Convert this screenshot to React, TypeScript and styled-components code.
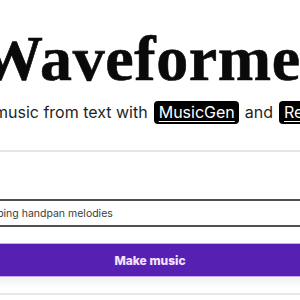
import React from "react";
import styled, { createGlobalStyle } from "styled-components";

const Global = createGlobalStyle`
  html, body { margin: 0; padding: 0; background: #fff; overflow: hidden; }
  body { font-family: Inter, "Noto Sans", sans-serif; color: #1f1f1f; }
`;

const Stage = styled.main`
  width: 740px;
  margin-left: -220px;
  display: flex;
  flex-direction: column;
`;

const Title = styled.h1`
  margin: 27px 0 0 199px;
  font-family: "Liberation Serif", serif;
  font-weight: 700;
  font-size: 64px;
  line-height: 64px;
  letter-spacing: 0.6px;
  -webkit-text-stroke: 0.6px #0a0a0a;
  white-space: nowrap;
  color: #0a0a0a;
`;

const Subtitle = styled.p`
  margin: 10px 0 0 140px;
  font-size: 16px;
  line-height: 23px;
  white-space: nowrap;
  display: flex;
  align-items: center;
  gap: 6px;
  color: #1f1f1f;
`;

const Pill = styled.a`
  background: #000;
  color: #fff;
  border-radius: 4px;
  padding: 0 4px 0 5px;
  line-height: 23px;
  text-decoration: underline;
  text-decoration-thickness: 1px;
  text-underline-offset: 3px;
`;

const Card = styled.section`
  margin-top: 26px;
  border-top: 2px solid #e6e6e6;
  padding: 47px 0 0;
  display: flex;
  flex-direction: column;
  gap: 16px;
`;

const Input = styled.input`
  height: 28px;
  box-sizing: border-box;
  border: none;
  border-top: 2px solid #505050;
  border-bottom: 2px solid #505050;
  padding: 0 0 0 202px;
  font-family: Inter, sans-serif;
  font-size: 10.5px;
  color: #3c3c3c;
  background: #fff;
  outline: none;
`;

const Button = styled.button`
  height: 34px;
  border: 1px solid #c9a8f7;
  background: #5620b2;
  color: #f4e2ff;
  font-family: Inter, sans-serif;
  font-weight: 800;
  font-size: 12px;
  box-shadow: 0 7px 8px rgba(0, 0, 0, 0.05);
`;

const Rule = styled.hr`
  margin: 0;
  border: none;
  border-top: 2px solid #e8e8e8;
`;

export default function App() {
  return (
    <>
      <Global />
      <Stage>
        <Title>Waveformer</Title>
        <Subtitle>
          Generate music from text with <Pill>MusicGen</Pill> and <Pill>Replicate</Pill>
        </Subtitle>
        <Card>
          <Input defaultValue="looping handpan melodies" />
          <Button>Make music</Button>
          <Rule />
        </Card>
      </Stage>
    </>
  );
}
